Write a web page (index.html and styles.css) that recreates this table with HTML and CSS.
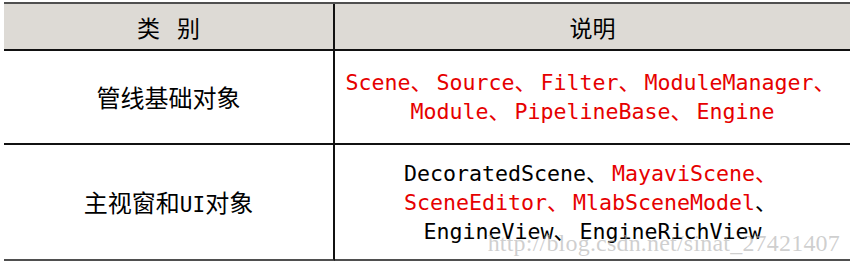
FILE: index.html
```html
<!DOCTYPE html>
<html lang="zh">
<head>
<meta charset="utf-8">
<title>类别 说明</title>
<link rel="stylesheet" href="styles.css">
</head>
<body>
<div class="sheet">
  <div class="grid">
    <div class="cell head left"><span class="sp">类 别</span></div>
    <div class="cell head">说明</div>

    <div class="cell r1 left label"><span>管线基础对象</span></div>
    <div class="cell r1 desc">
      <div class="red">Scene<span class="sep">、</span>Source<span class="sep">、</span>Filter<span class="sep">、</span>ModuleManager<span class="sep">、</span></div>
      <div class="red">Module<span class="sep">、</span>PipelineBase<span class="sep">、</span>Engine</div>
    </div>

    <div class="cell r2 left label"><span>主视窗和<span class="mono">UI</span>对象</span></div>
    <div class="cell r2 desc">
      <div>DecoratedScene<span class="sep">、</span><span class="red">MayaviScene<span class="sep">、</span></span></div>
      <div><span class="red">SceneEditor<span class="sep">、</span>MlabSceneModel</span><span class="sep">、</span></div>
      <div>EngineView<span class="sep">、</span>EngineRichView</div>
    </div>
  </div>
  <div class="mark">http://blog.csdn.net/sinat_27421407</div>
</div>
</body>
</html>
```

FILE: styles.css
```css
html, body {
  margin: 0;
  padding: 0;
  background: #ffffff;
}

.sheet {
  position: relative;
  width: 853px;
  height: 263px;
}

.grid {
  margin: 2px 3px 0 4px;
  border-top: 2px solid #4f4f4f;
  display: grid;
  grid-template-columns: 331px 1fr;
  font-family: "DejaVu Sans Mono", "Noto Sans CJK SC", monospace;
  color: #000000;
}

.cell {
  display: flex;
  flex-direction: column;
  align-items: center;
  justify-content: center;
  text-align: center;
}

.left {
  border-right: 2px solid #111111;
}

.head {
  height: 45px;
  background: #dddad5;
  border-bottom: 2px solid #111111;
  font-family: "Noto Sans CJK SC", sans-serif;
  font-size: 23px;
  line-height: 30px;
}

.sp {
  word-spacing: 12px;
}

.r1 {
  height: 92px;
  border-bottom: 2px solid #111111;
}

.r2 {
  height: 114px;
  border-bottom: 2px solid #4f4f4f;
}

.label {
  font-family: "Noto Sans CJK SC", sans-serif;
  font-size: 24px;
  line-height: 30px;
  white-space: nowrap;
}

.mono {
  font-family: "DejaVu Sans Mono", monospace;
  font-size: 21px;
  line-height: 20px;
}

.desc {
  font-size: 21.6px;
  line-height: 29px;
  white-space: nowrap;
}

.red {
  color: #e60000;
}

.sep {
  font-family: "Noto Sans CJK SC", sans-serif;
  line-height: 18px;
  margin-right: 4.4px;
}

.mark {
  position: absolute;
  right: 13px;
  top: 229px;
  font-family: "Liberation Serif", serif;
  font-size: 24px;
  line-height: 24px;
  letter-spacing: 0.2px;
  color: rgba(175, 175, 175, 0.6);
}
```
